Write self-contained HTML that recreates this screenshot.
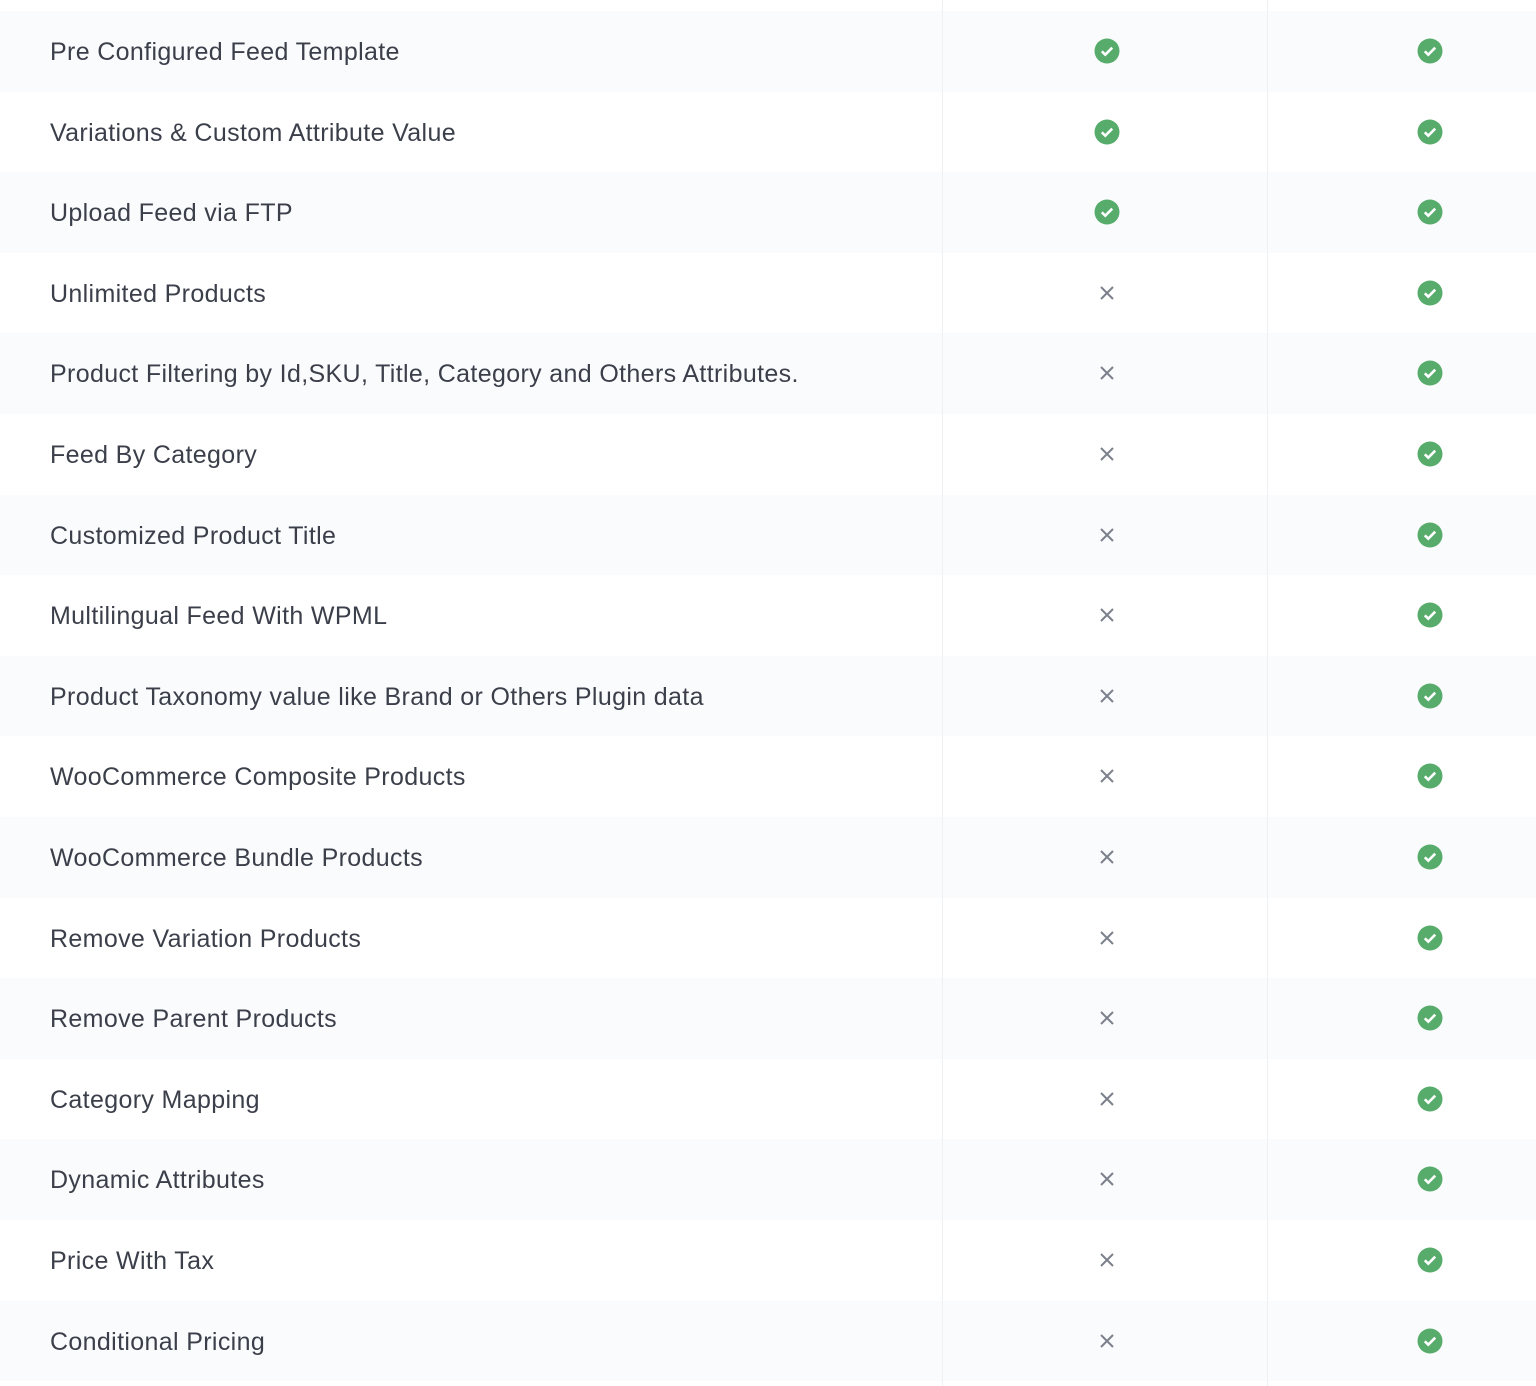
<!DOCTYPE html>
<html><head><style>
body{margin:0;width:1536px;height:1386px;background:#fff;font-family:"Liberation Sans",sans-serif;position:relative;overflow:hidden}
.vl{position:absolute;top:0;height:1386px;width:1px;background:#eef0f3}
.row{position:absolute;left:0;width:1536px;height:80.6px}
.row.s{background:#fafbfd}
.t{position:absolute;left:50px;top:1px;line-height:80px;font-size:25px;color:#3b3f4a;letter-spacing:0.35px}
.ic{position:absolute;top:27px}
</style></head><body>
<div id="rows"></div>
<div class="vl" style="left:942px"></div>
<div class="vl" style="left:1267px"></div>
<script>
var items=[["Pre Configured Feed Template",1],["Variations & Custom Attribute Value",1],["Upload Feed via FTP",1],["Unlimited Products",0],["Product Filtering by Id,SKU, Title, Category and Others Attributes.",0],["Feed By Category",0],["Customized Product Title",0],["Multilingual Feed With WPML",0],["Product Taxonomy value like Brand or Others Plugin data",0],["WooCommerce Composite Products",0],["WooCommerce Bundle Products",0],["Remove Variation Products",0],["Remove Parent Products",0],["Category Mapping",0],["Dynamic Attributes",0],["Price With Tax",0],["Conditional Pricing",0]];
var chk='<svg width="26" height="26" viewBox="0 0 26 26"><circle cx="13" cy="13" r="12.5" fill="#57ac6b"/><path d="M7.8 13.3l3.5 3.4 6.9-7" fill="none" stroke="#fff" stroke-width="2.6"/></svg>';
var x='<svg width="26" height="26" viewBox="0 0 26 26"><path d="M7 7l12 12M19 7L7 19" stroke="#7b808b" stroke-width="2"/></svg>';
var h='';
items.forEach(function(it,i){
 var top=11+i*80.6;
 h+='<div class="row'+(i%2==0?' s':'')+'" style="top:'+top+'px"><div class="t">'+it[0].replace('&','&amp;')+'</div><div class="ic" style="left:1094px">'+(it[1]?chk:x)+'</div><div class="ic" style="left:1417px">'+chk+'</div></div>';
});
document.getElementById('rows').innerHTML=h;
</script>
</body></html>
